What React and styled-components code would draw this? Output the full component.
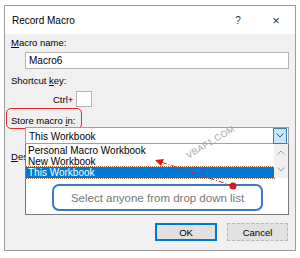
import styled, {createGlobalStyle} from 'styled-components';

const GlobalStyle = createGlobalStyle`
  html, body {
    margin: 0;
    padding: 0;
    background: #ffffff;
  }
  body {
    font-family: "Liberation Sans", Arial, sans-serif;
    font-size: 9.5px;
    color: #000;
  }
`;

const Dialog = styled.div`
  position: relative;
  box-sizing: border-box;
  width: 292px;
  height: 246px;
  margin: 5px 0 0 4px;
  border: 1px solid #9c9c9c;
  background: #f0f0f0;
  display: flex;
  flex-direction: column;
`;

const TitleBar = styled.div`
  height: 28px;
  background: #ffffff;
  display: flex;
  align-items: center;
  padding: 0 0 0 7px;
  font-size: 10px;
`;

const Title = styled.span`
  flex: 1;
`;

const TitleButton = styled.span`
  width: 38px;
  text-align: center;
  color: #333;
  font-size: ${({$size}) => $size || 11}px;
`;

const Body = styled.div`
  flex: 1;
  display: flex;
  flex-direction: column;
  padding: 2px 6px 0 6px;
`;

const Label = styled.div`
  line-height: 14px;
  margin-top: ${({$top}) => $top || 0}px;

  u {
    text-decoration: underline;
  }
`;

// only the start of "Description:" shows beside the open list
const HiddenLabel = styled(Label)`
  width: 16px;
  overflow: hidden;
  white-space: nowrap;
`;

const Field = styled.div`
  box-sizing: border-box;
  height: 17px;
  margin: 2px 0 0 14px;
  border: 1px solid #b4b4b4;
  background: #fff;
  display: flex;
  align-items: center;
  padding-left: 3px;
  font-size: 10px;
`;

const ShortcutRow = styled.div`
  display: flex;
  align-items: center;
  gap: 3px;
  margin: 3px 0 0 42px;
`;

const KeyBox = styled.div`
  box-sizing: border-box;
  width: 16px;
  height: 16px;
  border: 1px solid #b4b4b4;
  background: #fff;
`;

const StoreLabel = styled.div`
  position: relative;
  align-self: flex-start;
  line-height: 14px;
  margin-top: 7px;

  &::before {
    content: '';
    position: absolute;
    left: -5px;
    top: -6px;
    right: -7px;
    bottom: -1px;
    border: 1.5px solid #e8262b;
    border-radius: 5px;
  }
`;

const ComboWrap = styled.div`
  position: relative;
  margin: -1px 0 0 14px;
`;

const Combo = styled.div`
  box-sizing: border-box;
  height: 17px;
  border: 1px solid #a0a0a0;
  background: #fff;
  display: flex;
  align-items: center;
  font-size: 10px;
`;

const ComboText = styled.span`
  flex: 1;
  padding: 2px 0 0 3px;
`;

const DropButton = styled.span`
  box-sizing: border-box;
  width: 14px;
  height: 16px;
  background: #cce4f7;
  border: 1px solid #3c7fb1;
  display: flex;
  align-items: center;
  justify-content: center;
  margin-right: 1px;
`;

const List = styled.div`
  position: absolute;
  z-index: 2;
  left: 0;
  right: 0;
  top: 100%;
  height: 71px;
  box-sizing: border-box;
  border: 1px solid #7a7a7a;
  border-top: none;
  background: #fff;
`;

const ListTop = styled.div`
  display: flex;
`;

const Items = styled.div`
  flex: 1;
  padding-top: 1px;
`;

const Item = styled.div`
  box-sizing: border-box;
  height: 11px;
  line-height: 11px;
  padding-left: 2px;
  font-size: 10px;
  background: ${({$active}) => ($active ? '#0078d7' : 'transparent')};
  color: ${({$active}) => ($active ? '#fff' : '#000')};
  outline: ${({$active}) => ($active ? '1px dotted #a07040' : 'none')};
`;

const ScrollBar = styled.div`
  width: 14px;
  height: 34px;
  background: #f0f0f0;
  display: flex;
  flex-direction: column;
  align-items: center;
  justify-content: space-around;
`;

const Callout = styled.div`
  box-sizing: border-box;
  margin: 6px 25px 0 26px;
  height: 27px;
  border: 2px solid #3a78c9;
  border-radius: 7px;
  background: #fff;
  display: flex;
  align-items: center;
  justify-content: center;
  color: #777;
  font-size: 11.5px;
`;

const DescBox = styled.div`
  height: 48px;
  margin: 0 0 0 14px;
  border: 1px solid #b4b4b4;
  background: #fff;
`;

const Buttons = styled.div`
  display: flex;
  justify-content: flex-end;
  gap: 10px;
  margin-top: 9px;
  padding-right: 1px;
`;

const Button = styled.div`
  box-sizing: border-box;
  width: ${({$w}) => $w}px;
  height: 18px;
  background: #e1e1e1;
  border: ${({$primary}) => ($primary ? '2px solid #0078d7' : '1px dashed #b8b8b8')};
  display: flex;
  align-items: center;
  justify-content: center;
`;

const Watermark = styled.div`
  position: absolute;
  z-index: 3;
  left: 178px;
  top: 131px;
  transform: rotate(-31deg);
  color: #a8a8a8;
  font-size: 9px;
  letter-spacing: 0.3px;
  pointer-events: none;
`;

const Overlay = styled.svg`
  position: absolute;
  z-index: 4;
  left: -4px;
  top: -5px;
  pointer-events: none;
`;

const Chevron = ({up, color = '#a0a0a0'}) => (
  <svg width="8" height="5" viewBox="0 0 8 5">
    <path
      d={up ? 'M0.5 4.5 L4 1 L7.5 4.5' : 'M0.5 0.5 L4 4 L7.5 0.5'}
      fill="none"
      stroke={color}
      strokeWidth="1"
    />
  </svg>
);

const App = () => (
  <>
    <GlobalStyle />
    <Dialog>
      <TitleBar>
        <Title>Record Macro</Title>
        <TitleButton $size={10}>?</TitleButton>
        <TitleButton $size={13}>×</TitleButton>
      </TitleBar>
      <Body>
        <Label>
          <u>M</u>acro name:
        </Label>
        <Field>Macro6</Field>
        <Label $top={5}>
          Shortcut <u>k</u>ey:
        </Label>
        <ShortcutRow>
          <span>Ctrl+</span>
          <KeyBox />
        </ShortcutRow>
        <StoreLabel>
          Store macro <u>i</u>n:
        </StoreLabel>
        <ComboWrap>
          <Combo>
            <ComboText>This Workbook</ComboText>
            <DropButton>
              <Chevron color="#3c5a78" />
            </DropButton>
          </Combo>
          <List>
            <ListTop>
              <Items>
                <Item>Personal Macro Workbook</Item>
                <Item>New Workbook</Item>
                <Item $active>This Workbook</Item>
              </Items>
              <ScrollBar>
                <Chevron up />
                <Chevron />
              </ScrollBar>
            </ListTop>
            <Callout>Select anyone from drop down list</Callout>
          </List>
        </ComboWrap>
        <HiddenLabel $top={6}>
          <u>D</u>escription:
        </HiddenLabel>
        <DescBox />
        <Buttons>
          <Button $w={62} $primary>
            OK
          </Button>
          <Button $w={61}>Cancel</Button>
        </Buttons>
      </Body>
      <Watermark>VBAF1.COM</Watermark>
      <Overlay width="300" height="258">
        <line
          x1="232"
          y1="185"
          x2="160"
          y2="161"
          stroke="#d9262b"
          strokeWidth="1"
          strokeDasharray="5 2 1 2"
        />
        <polygon points="154,159 163,158 160,165" fill="#e0141b" />
        <circle cx="232" cy="185" r="3.5" fill="#e0141b" />
      </Overlay>
    </Dialog>
  </>
);

export default App;
